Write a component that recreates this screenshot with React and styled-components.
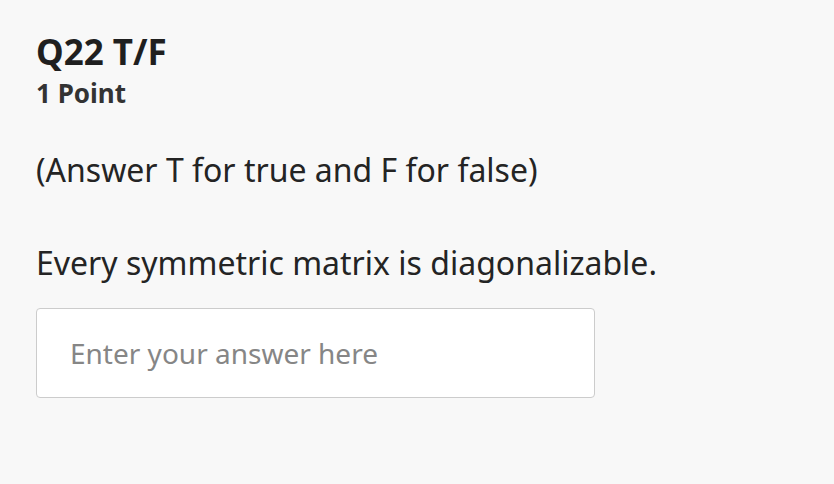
import styled, { createGlobalStyle } from 'styled-components';

const GlobalStyle = createGlobalStyle`
  html, body {
    margin: 0;
    padding: 0;
    background-color: #f8f8f8;
  }
  body {
    font-family: 'Noto Sans', 'Open Sans', sans-serif;
    color: #242424;
  }
`;

const Page = styled.div`
  min-height: 484px;
  padding: 28px 36px 0;
  box-sizing: border-box;
  display: flex;
  flex-direction: column;
`;

const QuestionHeader = styled.div`
  display: flex;
  flex-direction: column;
`;

const Title = styled.h1`
  margin: 0;
  font-size: 35px;
  line-height: 48px;
  font-weight: 700;
  color: #1f1f1f;
`;

const Points = styled.div`
  font-size: 26px;
  line-height: 34px;
  font-weight: 700;
  color: #333333;
`;

const Paragraph = styled.p`
  margin: ${(p) => p.$top}px 0 0;
  font-size: 32px;
  line-height: 38px;
  color: #242424;
`;

const AnswerInput = styled.input`
  margin-top: 26px;
  width: 559px;
  height: 90px;
  box-sizing: border-box;
  padding: 0 33px;
  border: 1.5px solid #cccccc;
  border-radius: 4px;
  background: #ffffff;
  font-family: 'Noto Sans', 'Open Sans', sans-serif;
  font-size: 28px;
  color: #242424;
  outline: none;

  &::placeholder {
    color: #868686;
  }
`;

export default function App() {
  return (
    <>
      <GlobalStyle />
      <Page>
        <QuestionHeader>
          <Title>Q22 T/F</Title>
          <Points>1 Point</Points>
        </QuestionHeader>
        <Paragraph $top={41}>(Answer T for true and F for false)</Paragraph>
        <Paragraph $top={55}>Every symmetric matrix is diagonalizable.</Paragraph>
        <AnswerInput type="text" placeholder="Enter your answer here" />
      </Page>
    </>
  );
}
